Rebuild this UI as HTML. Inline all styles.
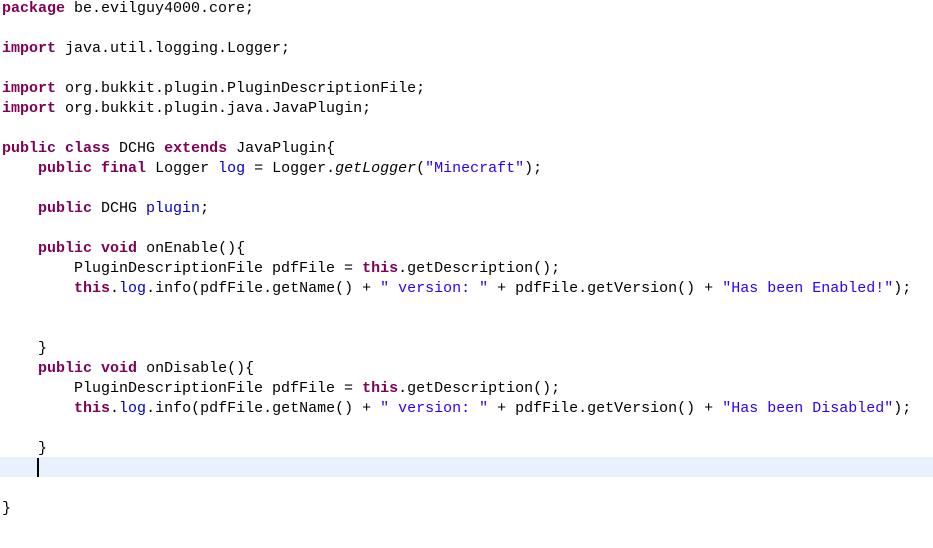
<html><head><style>
body{margin:0;background:#fff;width:933px;height:548px;overflow:hidden;position:relative}
pre{position:absolute;left:2px;top:-1px;margin:0;font:15px/20px "Liberation Mono",monospace;color:#000}
.k{color:#7f0055;font-weight:bold}.f{color:#0000c0}.s{color:#2a00ff}
.hl{position:absolute;left:0;top:457px;width:933px;height:20px;background:#e8f2fe}
.cur{position:absolute;left:37px;top:458px;width:2px;height:19px;background:#000}
</style></head><body>
<div class="hl"></div><div class="cur"></div>
<pre><span class="k">package</span> be.evilguy4000.core;

<span class="k">import</span> java.util.logging.Logger;

<span class="k">import</span> org.bukkit.plugin.PluginDescriptionFile;
<span class="k">import</span> org.bukkit.plugin.java.JavaPlugin;

<span class="k">public</span> <span class="k">class</span> DCHG <span class="k">extends</span> JavaPlugin{
    <span class="k">public</span> <span class="k">final</span> Logger <span class="f">log</span> = Logger.<i>getLogger</i>(<span class="s">"Minecraft"</span>);

    <span class="k">public</span> DCHG <span class="f">plugin</span>;

    <span class="k">public</span> <span class="k">void</span> onEnable(){
        PluginDescriptionFile pdfFile = <span class="k">this</span>.getDescription();
        <span class="k">this</span>.<span class="f">log</span>.info(pdfFile.getName() + <span class="s">" version: "</span> + pdfFile.getVersion() + <span class="s">"Has been Enabled!"</span>);


    }
    <span class="k">public</span> <span class="k">void</span> onDisable(){
        PluginDescriptionFile pdfFile = <span class="k">this</span>.getDescription();
        <span class="k">this</span>.<span class="f">log</span>.info(pdfFile.getName() + <span class="s">" version: "</span> + pdfFile.getVersion() + <span class="s">"Has been Disabled"</span>);

    }


}</pre>
</body></html>
